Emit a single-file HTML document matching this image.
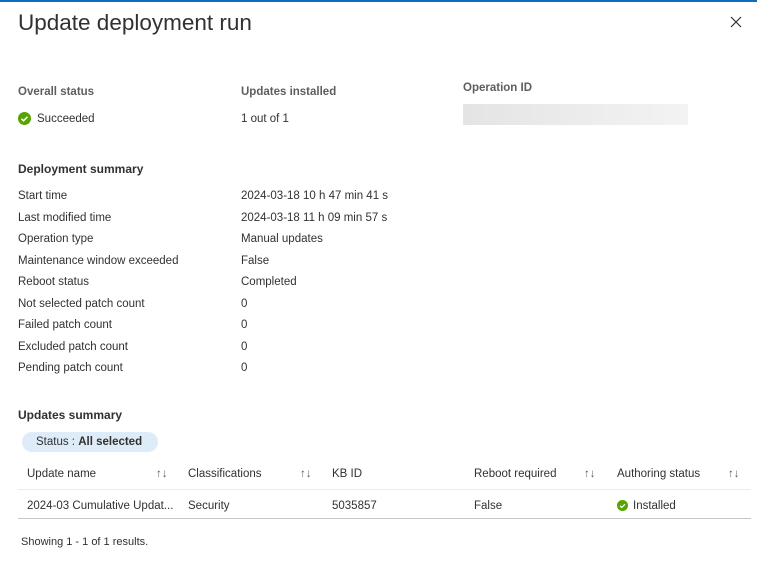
<!DOCTYPE html><html><head><style>
body{margin:0;width:757px;height:562px;background:#fff;font-family:"Liberation Sans",sans-serif;color:#323130;font-size:11.5px;position:relative;overflow:hidden}
.a{position:absolute;white-space:nowrap;line-height:14px}
.b{font-weight:bold;font-size:12px}
</style></head><body>
<div style="position:absolute;left:0;top:0;width:757px;height:2px;background:#0f6cbd"></div>
<div class="a" style="left:18px;top:9px;font-size:22.5px;line-height:28px">Update deployment run</div>
<svg class="a" style="left:730px;top:16px" width="12" height="12"><path d="M1 1L11 11M11 1L1 11" stroke="#323130" stroke-width="1.2"/></svg>
<div class="a" style="left:18px;top:85px;font-weight:bold;color:#605e5c">Overall status</div>
<div class="a" style="left:241px;top:85px;font-weight:bold;color:#605e5c">Updates installed</div>
<div class="a" style="left:463px;top:81px;font-weight:bold;color:#605e5c">Operation ID</div>
<svg class="a" style="left:18px;top:112px" width="13" height="13"><circle cx="6.5" cy="6.5" r="6.5" fill="#57a300"/><path d="M3.5 6.8l2 2 4-4" stroke="#fff" stroke-width="1.5" fill="none"/></svg>
<div class="a" style="left:37px;top:112px">Succeeded</div>
<div class="a" style="left:241px;top:112px">1 out of 1</div>
<div class="a" style="left:463px;top:104px;width:225px;height:21px;background:linear-gradient(90deg,#e4e4e4,#f3f3f3)"></div>
<div class="a b" style="left:18px;top:162px">Deployment summary</div>
<div class="a" style="left:18px;top:186px;line-height:21.5px">Start time<br>Last modified time<br>Operation type<br>Maintenance window exceeded<br>Reboot status<br>Not selected patch count<br>Failed patch count<br>Excluded patch count<br>Pending patch count</div>
<div class="a" style="left:241px;top:186px;line-height:21.5px">2024-03-18 10 h 47 min 41 s<br>2024-03-18 11 h 09 min 57 s<br>Manual updates<br>False<br>Completed<br>0<br>0<br>0<br>0</div>
<div class="a b" style="left:18px;top:408px">Updates summary</div>
<div class="a" style="left:22px;top:432px;width:136px;height:20px;border-radius:10px;background:#deecf9"></div>
<div class="a" style="left:36px;top:435px">Status : <b>All selected</b></div>
<div class="a" style="left:27px;top:467px">Update name</div><div class="a" style="left:156px;top:467px;color:#605e5c">↑↓</div>
<div class="a" style="left:188px;top:467px">Classifications</div><div class="a" style="left:300px;top:467px;color:#605e5c">↑↓</div>
<div class="a" style="left:332px;top:467px">KB ID</div>
<div class="a" style="left:474px;top:467px">Reboot required</div><div class="a" style="left:584px;top:467px;color:#605e5c">↑↓</div>
<div class="a" style="left:617px;top:467px">Authoring status</div><div class="a" style="left:728px;top:467px;color:#605e5c">↑↓</div>
<div class="a" style="left:18px;top:489px;width:733px;height:1px;background:#edebe9"></div>
<div class="a" style="left:27px;top:499px">2024-03 Cumulative Updat...</div>
<div class="a" style="left:188px;top:499px">Security</div>
<div class="a" style="left:332px;top:499px">5035857</div>
<div class="a" style="left:474px;top:499px">False</div>
<svg class="a" style="left:617px;top:500px" width="11" height="11"><circle cx="5.5" cy="5.5" r="5.5" fill="#57a300"/><path d="M3 5.8l1.7 1.7 3.3-3.3" stroke="#fff" stroke-width="1.3" fill="none"/></svg>
<div class="a" style="left:633px;top:499px">Installed</div>
<div class="a" style="left:18px;top:518px;width:733px;height:1px;background:#c8c6c4"></div>
<div class="a" style="left:21px;top:535px;font-size:11px">Showing 1 - 1 of 1 results.</div>
</body></html>
